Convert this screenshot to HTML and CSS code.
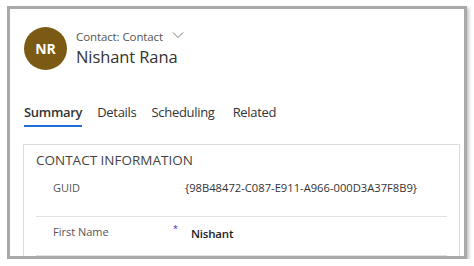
FILE: index.html
```html
<!DOCTYPE html>
<html lang="en">
<head>
    <meta charset="UTF-8">
    <title>Contact: Nishant Rana</title>
    <link rel="stylesheet" href="styles.css">
</head>
<body>
    <div class="frame">
        <!-- record header -->
        <div class="header">
            <div class="avatar">NR</div>
            <div class="title-block">
                <div class="entity">Contact: Contact
                    <svg class="chevron" width="12" height="8" viewBox="0 0 12 8"><path d="M1 1.5 L6 6.5 L11 1.5" fill="none" stroke="#777" stroke-width="1"/></svg>
                </div>
                <div class="name">Nishant Rana</div>
            </div>
        </div>

        <!-- tabs -->
        <div class="tabs">
            <span class="tab active">Summary</span>
            <span class="tab">Details</span>
            <span class="tab">Scheduling</span>
            <span class="tab wide">Related</span>
        </div>

        <!-- section -->
        <div class="section">
            <div class="section-title">CONTACT INFORMATION</div>
            <div class="row first">
                <span class="label">GUID</span>
                <span class="value">{98B48472-C087-E911-A966-000D3A37F8B9}</span>
            </div>
            <div class="row">
                <span class="label short">First Name</span>
                <span class="req">*</span>
                <span class="value strong">Nishant</span>
            </div>
        </div>
    </div>
</body>
</html>
```
FILE: styles.css
```css
body {
    margin: 0;
    padding: 0;
    background-color: #fff;
    font-family: "Open Sans", "Noto Sans", Arial, sans-serif;
    color: #333;
}
.frame {
    margin: 6px 0 0 7px;
    width: 454px;
    height: 247px;
    border: 3px solid #a9a9a9;
    box-shadow: 2px 2px 3px #c4c4c4;
    background-color: #fff;
    overflow: hidden;
}
.header {
    display: flex;
    align-items: center;
    gap: 9px;
    padding: 18px 0 0 14px;
}
.avatar {
    width: 43px;
    height: 43px;
    border-radius: 50%;
    background-color: #7b5b13;
    color: #fff;
    font-size: 14px;
    font-weight: 700;
    display: flex;
    align-items: center;
    justify-content: center;
}
.title-block {
    margin-top: 1px;
}
.entity {
    font-size: 11.5px;
    letter-spacing: -0.1px;
    line-height: 16px;
    color: #555;
}
.chevron {
    margin-left: 6px;
    vertical-align: 2px;
}
.name {
    font-size: 16.5px;
    letter-spacing: -0.1px;
    line-height: 24px;
    color: #333;
}
.tabs {
    display: flex;
    gap: 15px;
    padding: 32px 0 0 14px;
}
.tab {
    font-size: 13px;
    letter-spacing: -0.3px;
    line-height: 20px;
    padding-bottom: 3px;
    color: #333;
    border-bottom: 2px solid transparent;
}
.tab.active {
    font-weight: 600;
    border-bottom-color: #1f6fd8;
}
.tab.wide {
    margin-left: 3px;
}
.section {
    margin: 17px 0 0 13px;
    width: 435px;
    border: 1px solid #dcdcdc;
    height: 200px;
}
.section-title {
    font-size: 13.5px;
    color: #444;
    padding: 6px 0 0 12px;
    line-height: 18px;
}
.row {
    display: flex;
    align-items: flex-start;
    margin: 0 12px;
    height: 31px;
    padding-top: 7px;
    border-bottom: 1px solid #e2e2e2;
    font-size: 11px;
    line-height: 16px;
}
.row.first {
    height: 36px;
    padding-top: 11px;
}
.label {
    width: 132px;
    padding-left: 17px;
    color: #555;
}
.label.short {
    width: 120px;
}
.req {
    width: 18px;
    color: #3b2bd0;
    font-size: 9px;
    margin-top: -3px;
}
.value {
    font-size: 11.2px;
    color: #333;
}
.strong {
    font-weight: 600;
    font-size: 11.5px;
    letter-spacing: -0.2px;
    color: #222;
    margin-top: 2px;
}
```
